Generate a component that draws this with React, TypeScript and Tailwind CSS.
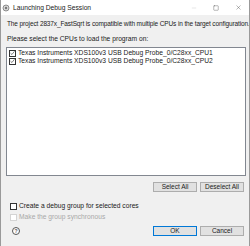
import { Minus, Square, X } from 'lucide-react';

const font = { fontFamily: '"Liberation Sans", "Noto Sans", sans-serif' };

function CheckBox({ checked, disabled }: { checked?: boolean; disabled?: boolean }) {
  return (
    <span
      className={
        'flex h-[7px] w-[7px] shrink-0 items-center justify-center border bg-white ' +
        (disabled ? 'border-[#d4d4d4]' : 'border-[#333333]')
      }
    >
      {checked && (
        <svg width="6" height="6" viewBox="0 0 6 6">
          <path d="M0.6 3.2 L2.3 4.8 L5.4 0.9" fill="none" stroke="#444" strokeWidth="0.8" />
        </svg>
      )}
    </span>
  );
}

function Btn({ label, primary }: { label: string; primary?: boolean }) {
  return (
    <button
      type="button"
      className={
        'flex h-[10px] w-[44px] items-center justify-center border bg-[#e1e1e1] text-[6.5px] leading-none text-[#1a1a1a] ' +
        (primary ? 'border-[#0078d7]' : 'border-[#adadad]')
      }
    >
      {label}
    </button>
  );
}

export default function App() {
  const cpus = [
    'Texas Instruments XDS100v3 USB Debug Probe_0/C28xx_CPU1',
    'Texas Instruments XDS100v3 USB Debug Probe_0/C28xx_CPU2',
  ];

  return (
    <div style={font} className="flex h-[246px] w-[250px] flex-col overflow-hidden whitespace-nowrap border-x border-[#9a9a9a] bg-[#f0f0f0] text-[6.7px] leading-[8px] text-[#1a1a1a]">
      {/* title bar */}
      <div className="flex h-[15px] shrink-0 items-center bg-white pl-[1px]">
        <svg width="8" height="8" viewBox="0 0 8 8" className="mr-[3px]">
          <circle cx="4" cy="4" r="3" fill="#d8d8d8" stroke="#777" strokeWidth="0.8" />
          <circle cx="4" cy="4" r="1.2" fill="#777" />
        </svg>
        <span className="text-[#222]">Launching Debug Session</span>
        <div className="ml-auto flex items-center">
          <span className="flex w-[22px] justify-center text-[#aaa]">
            <Minus size={6} strokeWidth={1.2} />
          </span>
          <span className="flex w-[22px] justify-center text-[#333]">
            <Square size={6} strokeWidth={1.4} />
          </span>
          <span className="flex w-[22px] justify-center text-[#333]">
            <X size={7} strokeWidth={1.2} />
          </span>
        </div>
      </div>

      <div className="flex flex-1 flex-col px-[5px]">
        <p className="mt-[5px] pl-[1px] text-[6.5px] tracking-[-0.12px]">
          The project 2837x_FastSqrt is compatible with multiple CPUs in the target configuration.
        </p>
        <p className="mt-[7px] pl-[1px]">Please select the CPUs to load the program on:</p>

        <div className="mt-[4px] flex h-[129px] w-[240px] shrink-0 flex-col border border-[#828790] bg-white pt-[1px]">
          {cpus.map((c) => (
            <div key={c} className="flex h-[8px] items-center gap-[2px] pl-[2px]">
              <CheckBox checked />
              <span>{c}</span>
            </div>
          ))}
        </div>

        <div className="mt-[6px] flex justify-end gap-[3px]">
          <Btn label="Select All" />
          <Btn label="Deselect All" />
        </div>

        <div className="mt-[10px] flex items-center gap-[2px] pl-[4px]">
          <CheckBox />
          <span>Create a debug group for selected cores</span>
        </div>
        <div className="mt-[3px] flex items-center gap-[2px] pl-[4px] text-[#a8a8a8]">
          <CheckBox disabled />
          <span>Make the group synchronous</span>
        </div>

        <div className="mt-[5px] flex items-center">
          <span className="ml-[6px] flex h-[8px] w-[8px] items-center justify-center rounded-full border border-[#555] bg-white text-[5px] font-bold leading-none text-[#555]">
            ?
          </span>
          <div className="ml-auto flex gap-[3px]">
            <Btn label="OK" primary />
            <Btn label="Cancel" />
          </div>
        </div>
      </div>
    </div>
  );
}
